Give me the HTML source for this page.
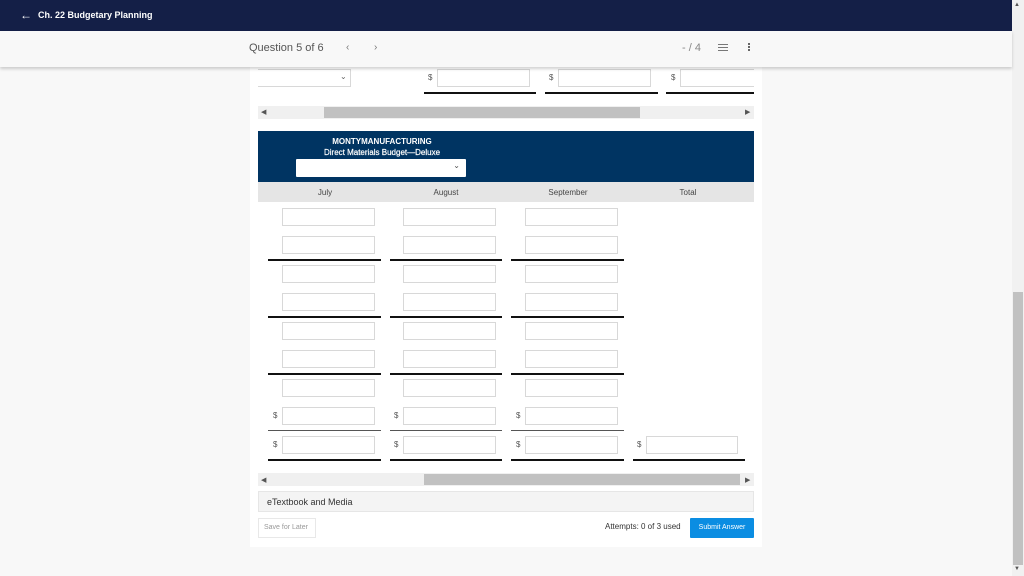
<!DOCTYPE html>
<html><head><style>
*{box-sizing:border-box;margin:0;padding:0}
body{width:1024px;height:576px;overflow:hidden;background:#f8f8f8;font-family:"Liberation Sans",sans-serif;position:relative}
.a{position:absolute}
.hdr{left:0;top:0;width:1012px;height:31px;background:#141f47;color:#fff;font-size:9px;font-weight:bold}
.tb{left:0;top:31px;width:1012px;height:36px;background:#f8f8f8;box-shadow:0 2px 3px rgba(0,0,0,.18);z-index:3}
.panel{left:250px;top:67px;width:512px;height:480px;background:#fff}
.in{position:absolute;height:18px;border:1px solid #d8d8d8;background:#fff}
.ln{position:absolute;height:2px;background:#111}
.d{position:absolute;font-size:8px;color:#555}
.sb{left:1012px;top:0;width:12px;height:576px;background:#f1f1f1}
</style></head><body>
<div class="a hdr"><span class="a" style="left:20px;top:8px;font-size:12px;font-weight:normal">&#8592;</span><span class="a" style="left:38px;top:10px">Ch. 22 Budgetary Planning</span></div>
<div class="a tb">
<span class="a" style="left:249px;top:11px;font-size:11px;color:#555">Question 5 of 6</span>
<span class="a" style="left:346px;top:11px;font-size:10px;color:#777">&#8249;</span>
<span class="a" style="left:374px;top:11px;font-size:10px;color:#777">&#8250;</span>
<span class="a" style="left:682px;top:11px;font-size:11px;color:#888">- / 4</span>
<span class="a" style="left:718px;top:13px;width:10px;height:1px;background:#777;box-shadow:0 3px 0 #777,0 6px 0 #777"></span>
<span class="a" style="left:748px;top:12px;width:2px;height:2px;background:#666;box-shadow:0 3px 0 #666,0 6px 0 #666"></span>
</div>
<div class="a panel"></div>
<!-- top partial row -->
<div class="in" style="left:258px;top:69px;width:93px;height:18px;border-left:none"></div>
<span class="a" style="left:340px;top:72px;font-size:8px;color:#666">&#8964;</span>
<span class="d" style="left:428px;top:73px">$</span><div class="in" style="left:437px;top:69px;width:93px"></div>
<span class="d" style="left:549px;top:73px">$</span><div class="in" style="left:558px;top:69px;width:93px"></div>
<span class="d" style="left:671px;top:73px">$</span><div class="in" style="left:680px;top:69px;width:74px;border-right:none"></div>
<div class="ln" style="left:424px;top:92px;width:112px"></div>
<div class="ln" style="left:545px;top:92px;width:113px"></div>
<div class="ln" style="left:666px;top:92px;width:88px"></div>
<div class="a" style="left:258px;top:106px;width:496px;height:13px;background:#f0f0f0"></div>
<div class="a" style="left:324px;top:107px;width:316px;height:11px;background:#c1c1c1"></div>
<span class="a" style="left:261px;top:108px;font-size:7px;color:#555">&#9664;</span>
<span class="a" style="left:745px;top:108px;font-size:7px;color:#555">&#9654;</span>
<!-- table header -->
<div class="a" style="left:258px;top:131px;width:496px;height:51px;background:#003462;color:#fff;font-size:8px;font-weight:bold;text-align:center">
<div style="position:absolute;left:0;width:248px;top:6px">MONTYMANUFACTURING</div>
<div style="position:absolute;left:0;width:248px;top:17px;font-weight:normal;-webkit-text-stroke:.2px #fff">Direct Materials Budget—Deluxe</div>
<div style="position:absolute;left:38px;top:28px;width:170px;height:18px;background:#fff;border-radius:1px"><span style="position:absolute;right:6px;top:2px;color:#555;font-weight:normal">&#8964;</span></div>
</div>
<div class="a" style="left:258px;top:182px;width:496px;height:20px;background:#e5e5e5;font-size:8px;color:#444">
<span class="a" style="left:0;width:134px;top:6px;text-align:center">July</span>
<span class="a" style="left:128px;width:120px;top:6px;text-align:center">August</span>
<span class="a" style="left:250px;width:120px;top:6px;text-align:center">September</span>
<span class="a" style="left:370px;width:120px;top:6px;text-align:center">Total</span>
</div>
<div id="g"></div>
<script>
var ys=[208,236,265,293,322,350,379,407,436],xs=[282,403,525,646],h='';
ys.forEach(function(y,i){for(var c=0;c<3;c++){h+='<div class="in" style="left:'+xs[c]+'px;top:'+y+'px;width:93px"></div>';if(i>=7)h+='<span class="d" style="left:'+(xs[c]-9)+'px;top:'+(y+4)+'px">$</span>';}});
h+='<div class="in" style="left:646px;top:436px;width:92px"></div><span class="d" style="left:637px;top:440px">$</span>';
var lx=[[268,113],[390,112],[511,113],[633,112]];
[259,316,373].forEach(function(y){for(var c=0;c<3;c++)h+='<div class="ln" style="left:'+lx[c][0]+'px;top:'+y+'px;width:'+lx[c][1]+'px;height:2px"></div>';});
for(var c=0;c<3;c++)h+='<div class="ln" style="left:'+lx[c][0]+'px;top:430px;width:'+lx[c][1]+'px;height:1px;background:#555"></div>';
for(var c=0;c<4;c++)h+='<div class="ln" style="left:'+lx[c][0]+'px;top:459px;width:'+lx[c][1]+'px;height:2px"></div>';
document.getElementById('g').innerHTML=h;
</script>
<div class="a" style="left:258px;top:473px;width:496px;height:13px;background:#f0f0f0"></div>
<div class="a" style="left:424px;top:474px;width:316px;height:11px;background:#c1c1c1"></div>
<span class="a" style="left:261px;top:476px;font-size:7px;color:#555">&#9664;</span>
<span class="a" style="left:745px;top:476px;font-size:7px;color:#555">&#9654;</span>
<div class="a" style="left:258px;top:491px;width:496px;height:21px;background:#f4f4f4;border:1px solid #e6e6e6;font-size:9px;color:#333;padding:5px 0 0 8px">eTextbook and Media</div>
<div class="a" style="left:258px;top:518px;width:58px;height:20px;border:1px solid #e8e8e8;font-size:7px;color:#999;padding:5px 0 0 5px">Save for Later</div>
<span class="a" style="left:605px;top:522px;font-size:8px;color:#333">Attempts: 0 of 3 used</span>
<div class="a" style="left:690px;top:518px;width:64px;height:20px;background:#0b8de2;color:#fff;font-size:7px;text-align:center;padding-top:6px;border-radius:1px">Submit Answer</div>
<div class="a sb"><div class="a" style="left:1px;top:292px;width:10px;height:273px;background:#c1c1c1"></div>
<span class="a" style="left:2px;top:2px;font-size:6px;color:#555">&#9650;</span><span class="a" style="left:2px;top:566px;font-size:6px;color:#555">&#9660;</span></div>
</body></html>
